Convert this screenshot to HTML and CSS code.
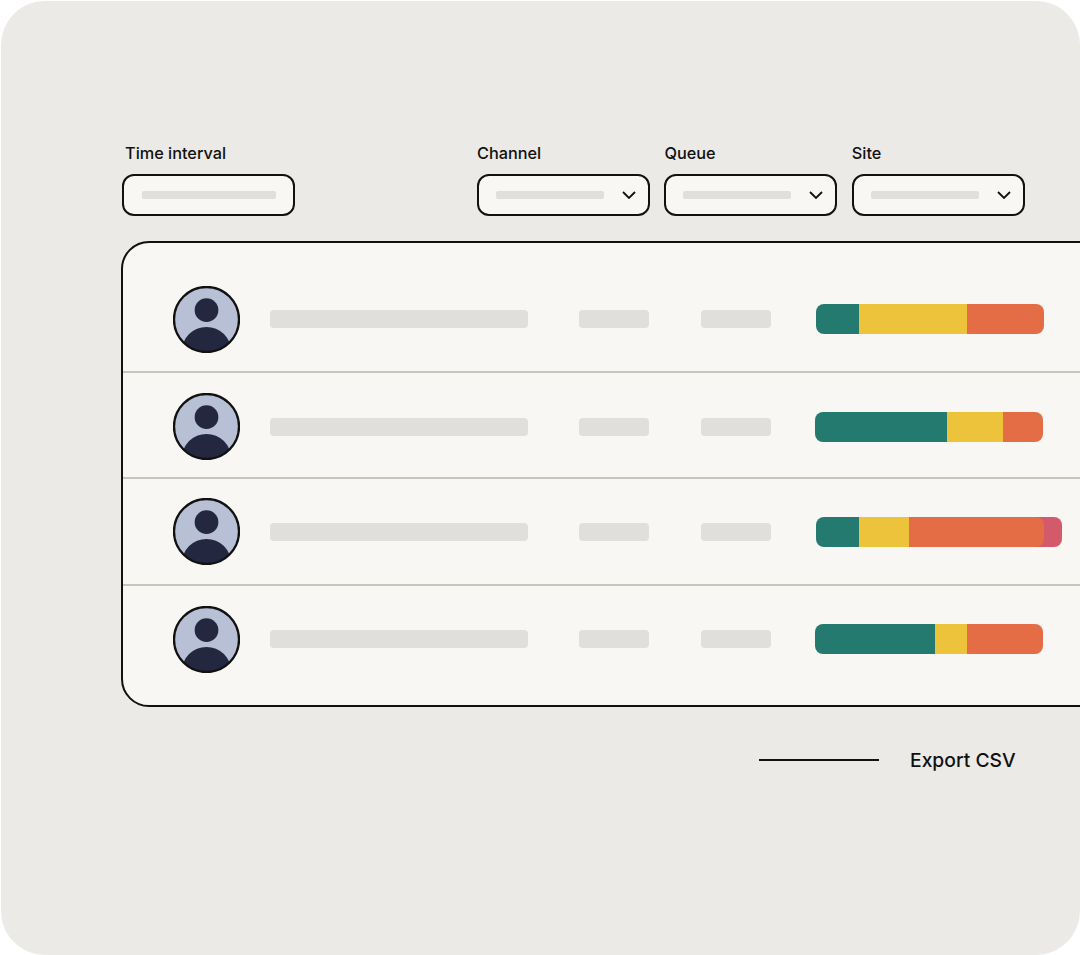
FILE: index.html
```html
<!DOCTYPE html>
<html lang="en">
<head>
<meta charset="UTF-8">
<title>Export CSV</title>
<link rel="stylesheet" href="styles.css">
</head>
<body>
  <main class="panel">
    <section class="filters">
      <div class="filter filter-time">
        <span class="filter-label">Time interval</span>
        <div class="field"><span class="field-line"></span></div>
      </div>
      <div class="filter">
        <span class="filter-label">Channel</span>
        <div class="field">
          <span class="field-line"></span>
          <svg class="chevron" viewBox="0 0 14 8"><path d="M1 1l6 6 6-6"/></svg>
        </div>
      </div>
      <div class="filter">
        <span class="filter-label">Queue</span>
        <div class="field">
          <span class="field-line"></span>
          <svg class="chevron" viewBox="0 0 14 8"><path d="M1 1l6 6 6-6"/></svg>
        </div>
      </div>
      <div class="filter">
        <span class="filter-label">Site</span>
        <div class="field">
          <span class="field-line"></span>
          <svg class="chevron" viewBox="0 0 14 8"><path d="M1 1l6 6 6-6"/></svg>
        </div>
      </div>
    </section>

    <section class="table">
      <div class="row row-first">
        <svg class="avatar" viewBox="0 0 68 68"><defs><clipPath id="av1"><circle cx="34" cy="34" r="33"/></clipPath></defs><circle class="avatar-bg" cx="34" cy="34" r="33"/><g class="avatar-person" clip-path="url(#av1)"><circle cx="34" cy="24.500" r="12"/><circle cx="34" cy="66.500" r="25"/></g><circle class="avatar-ring" cx="34" cy="34" r="33"/></svg>
        <span class="cell cell-name"></span>
        <span class="cell cell-short"></span>
        <span class="cell cell-short"></span>
        <div class="bar">
          <span class="seg teal" style="width:43.200px"></span>
          <span class="seg yellow" style="width:108px"></span>
          <span class="seg orange" style="width:76.800px"></span>
        </div>
      </div>
      <div class="row row-second">
        <svg class="avatar" viewBox="0 0 68 68"><defs><clipPath id="av2"><circle cx="34" cy="34" r="33"/></clipPath></defs><circle class="avatar-bg" cx="34" cy="34" r="33"/><g class="avatar-person" clip-path="url(#av2)"><circle cx="34" cy="24.500" r="12"/><circle cx="34" cy="66.500" r="25"/></g><circle class="avatar-ring" cx="34" cy="34" r="33"/></svg>
        <span class="cell cell-name"></span>
        <span class="cell cell-short"></span>
        <span class="cell cell-short"></span>
        <div class="bar bar-left">
          <span class="seg teal" style="width:132px"></span>
          <span class="seg yellow" style="width:56px"></span>
          <span class="seg orange" style="width:40px"></span>
        </div>
      </div>
      <div class="row">
        <svg class="avatar" viewBox="0 0 68 68"><defs><clipPath id="av3"><circle cx="34" cy="34" r="33"/></clipPath></defs><circle class="avatar-bg" cx="34" cy="34" r="33"/><g class="avatar-person" clip-path="url(#av3)"><circle cx="34" cy="24.500" r="12"/><circle cx="34" cy="66.500" r="25"/></g><circle class="avatar-ring" cx="34" cy="34" r="33"/></svg>
        <span class="cell cell-name"></span>
        <span class="cell cell-short"></span>
        <span class="cell cell-short"></span>
        <div class="bar bar-over">
          <span class="seg teal" style="width:43.200px"></span>
          <span class="seg yellow" style="width:49.800px"></span>
          <span class="seg orange seg-top" style="width:135px"></span>
          <span class="seg pink" style="width:36px"></span>
        </div>
      </div>
      <div class="row row-last">
        <svg class="avatar" viewBox="0 0 68 68"><defs><clipPath id="av4"><circle cx="34" cy="34" r="33"/></clipPath></defs><circle class="avatar-bg" cx="34" cy="34" r="33"/><g class="avatar-person" clip-path="url(#av4)"><circle cx="34" cy="24.500" r="12"/><circle cx="34" cy="66.500" r="25"/></g><circle class="avatar-ring" cx="34" cy="34" r="33"/></svg>
        <span class="cell cell-name"></span>
        <span class="cell cell-short"></span>
        <span class="cell cell-short"></span>
        <div class="bar bar-left">
          <span class="seg teal" style="width:120px"></span>
          <span class="seg yellow" style="width:32px"></span>
          <span class="seg orange" style="width:76px"></span>
        </div>
      </div>
    </section>

    <footer class="export">
      <span class="export-line"></span>
      <span class="export-text">Export CSV</span>
    </footer>
  </main>
</body>
</html>
```
FILE: styles.css
```css
* {
  margin: 0;
  padding: 0;
  box-sizing: border-box;
}

html, body {
  width: 1080px;
  height: 955px;
  overflow: hidden;
  background-color: #ffffff;
}

body {
  font-family: "Inter", "Liberation Sans", sans-serif;
  color: #111111;
  padding: 1px 0 0 1px;
}

.panel {
  width: 1079px;
  height: 954px;
  background-color: #ebeae6;
  border-radius: 44px;
  padding: 142px 0 0 120px;
  overflow: hidden;
}

/* filters */
.filters {
  display: flex;
  gap: 14.400px;
  padding-left: 1px;
}

.filter {
  width: 173px;
  display: flex;
  flex-direction: column;
  gap: 10px;
}

.filter-time {
  margin-right: 167.600px;
}

.filter-label {
  font-size: 16.300px;
  line-height: 21px;
  font-weight: 500;
}

.filter-time .filter-label {
  padding-left: 3px;
}

.field {
  height: 42px;
  background-color: #f8f7f3;
  border: 2px solid #111111;
  border-radius: 12px;
  display: flex;
  align-items: center;
  padding: 0 12px 0 17px;
  justify-content: space-between;
}

.field-line {
  width: 108px;
  height: 8px;
  background-color: #e0dfdb;
  border-radius: 2px;
}

.filter-time .field {
  padding-left: 18px;
}

.filter-time .field-line {
  width: 134px;
}

.chevron {
  width: 14px;
  height: 8px;
  fill: none;
  stroke: #111111;
  stroke-width: 1.800;
}

/* table */
.table {
  width: 1040px;
  margin-top: 25px;
  background-color: #f8f7f3;
  border: 2px solid #111111;
  border-radius: 28px;
}

.row {
  height: 107px;
  display: flex;
  align-items: center;
  padding-left: 50px;
  border-bottom: 2px solid #c8c6bc;
}

.row-first {
  height: 130px;
  padding-top: 24px;
}

.row-second {
  height: 106px;
  padding-top: 3px;
}

.row-last {
  height: 119px;
  border-bottom: 0;
  padding-bottom: 13px;
}

.avatar {
  width: 67px;
  height: 67px;
  flex: none;
}

.avatar-bg {
  fill: #b8c0d6;
}

.avatar-person {
  fill: #232740;
}

.avatar-ring {
  fill: none;
  stroke: #111111;
  stroke-width: 2.400;
}

.cell {
  height: 18px;
  background-color: #e0dfdb;
  border-radius: 4px;
}

.cell-name {
  width: 258px;
  margin-left: 30px;
}

.cell-short {
  width: 70px;
  margin-left: 51px;
}

.cell-short + .cell-short {
  margin-left: 52px;
}

/* stacked bars */
.bar {
  display: flex;
  width: 228px;
  height: 30px;
  margin-left: 45px;
  border-radius: 8px;
  overflow: hidden;
}

.bar-left {
  margin-left: 44px;
}

.bar-over {
  width: 246px;
}

.seg {
  display: block;
  flex: none;
  height: 100%;
}

.teal {
  background-color: #247a6f;
}

.yellow {
  background-color: #eec33c;
}

.orange {
  background-color: #e46d46;
}

.pink {
  background-color: #d25a6a;
  margin-left: -18px;
}

.seg-top {
  position: relative;
  z-index: 1;
  border-radius: 0 8px 8px 0;
}

/* export */
.export {
  display: flex;
  align-items: center;
  margin-top: 40px;
  padding-left: 638px;
  gap: 31px;
}

.export-line {
  width: 120px;
  height: 2px;
  background-color: #111111;
}

.export-text {
  font-size: 19.300px;
  line-height: 26px;
  font-weight: 500;
}
```
